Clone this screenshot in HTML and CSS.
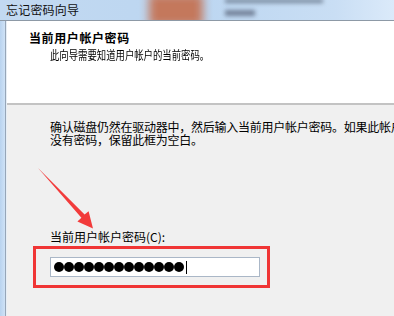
FILE: index.html
```html
<!DOCTYPE html>
<html lang="zh-CN">
<head>
<meta charset="utf-8">
<title>忘记密码向导</title>
<link rel="stylesheet" href="styles.css">
</head>
<body>
<div class="window">
  <div class="titlebar">
    <span class="title">忘记密码向导</span>
    <div class="blob"></div>
    <div class="blurtext">
      <div class="bt1"></div>
      <div class="bt2"></div>
    </div>
  </div>
  <div class="frame">
    <div class="edge"></div>
    <div class="content">
      <div class="header">
        <div class="h-title">当前用户帐户密码</div>
        <div class="h-sub"><span>此向导需要知道用户帐户的当前密码。</span></div>
      </div>
      <div class="sep"></div>
      <div class="body">
        <p class="desc">确认磁盘仍然在驱动器中，然后输入当前用户帐户密码。如果此帐户<br>没有密码，保留此框为空白。</p>
        <div class="label">当前用户帐户密码(C):</div>
        <div class="highlight">
          <div class="input">
            <span class="dot"></span><span class="dot"></span><span class="dot"></span><span class="dot"></span><span class="dot"></span><span class="dot"></span><span class="dot"></span><span class="dot"></span><span class="dot"></span><span class="dot"></span><span class="dot"></span><span class="dot"></span><span class="dot"></span><span class="caret"></span>
          </div>
        </div>
        <svg class="arrow" width="394" height="220" viewBox="0 105 394 220">
          <polygon points="38,168 84.6,214.6 88.6,211.2 93,228.5 77.4,221.6 81.4,217.8" fill="#f23b3b"/>
        </svg>
      </div>
    </div>
  </div>
</div>
</body>
</html>
```
FILE: styles.css
```css
html, body {
  margin: 0;
  padding: 0;
}
body {
  width: 394px;
  height: 316px;
  overflow: hidden;
  font-family: "Noto Sans CJK SC", "Noto Sans", sans-serif;
  font-size: 12px;
  color: #000;
}
.window {
  width: 394px;
  height: 316px;
  display: flex;
  flex-direction: column;
  overflow: hidden;
}
.titlebar {
  height: 20px;
  flex: none;
  display: flex;
  align-items: flex-start;
  background: linear-gradient(to right, #c2d9f1 0%, #bcd6f1 50%, #c9def4 85%, #dbeafa 100%);
  overflow: hidden;
}
.title {
  margin-left: 6px;
  margin-top: 2px;
  line-height: 16px;
  font-size: 12px;
  color: #111;
  letter-spacing: 0.2px;
  white-space: nowrap;
}
.blob {
  margin-left: 70px;
  margin-top: -6px;
  width: 54px;
  height: 32px;
  background: #c4785c;
  filter: blur(5px);
  flex: none;
}
.blurtext {
  margin-left: 22px;
  display: flex;
  flex-direction: column;
  flex: none;
}
.bt1 {
  width: 98px;
  height: 4px;
  margin-top: -1px;
  background: #75869a;
  filter: blur(2px);
}
.bt2 {
  width: 30px;
  height: 6px;
  margin-top: 7px;
  background: #74839a;
  filter: blur(2px);
}
.frame {
  flex: 1;
  display: flex;
  border-top: 1px solid #8d99a6;
  min-height: 0;
}
.edge {
  width: 5px;
  flex: none;
  background: linear-gradient(to right, #b9d3ef, #cfe2f6);
  border-right: 1px solid #97a6b8;
}
.content {
  flex: 1;
  display: flex;
  flex-direction: column;
  border-left: 1px solid #e6eef6;
  min-width: 0;
}
.header {
  height: 82px;
  flex: none;
  background: #fff;
  padding: 10px 0 0 22px;
  box-sizing: border-box;
}
.h-title {
  font-weight: bold;
  font-size: 12px;
  line-height: 14px;
  letter-spacing: 0.6px;
  white-space: nowrap;
}
.h-sub {
  margin: 3px 0 0 21px;
  line-height: 14px;
  white-space: nowrap;
}
.h-sub span {
  display: inline-block;
  transform: scaleX(0.78);
  transform-origin: left center;
}
.sep {
  height: 2px;
  flex: none;
  background: #c3c3c3;
}
.body {
  flex: 1;
  position: relative;
  background: #f0f0f0;
  padding: 15px 0 0 43px;
  overflow: hidden;
}
.desc {
  margin: 0;
  line-height: 13px;
  letter-spacing: -0.25px;
  white-space: nowrap;
}
.label {
  margin-top: 84px;
  line-height: 14px;
  white-space: nowrap;
}
.highlight {
  margin: 2px 0 0 -17px;
  width: 237px;
  height: 42px;
  box-sizing: border-box;
  border: 3px solid #f03535;
  padding: 8px 7px 0 14px;
}
.input {
  height: 20px;
  box-sizing: border-box;
  background: #fff;
  border: 1px solid #aab7c7;
  display: flex;
  align-items: center;
  padding-left: 3px;
}
.dot {
  width: 10px;
  height: 10px;
  border-radius: 50%;
  background: #000;
  flex: none;
}
.caret {
  width: 1px;
  height: 13px;
  background: #000;
  margin-left: 2px;
  flex: none;
}
.arrow {
  position: absolute;
  left: -7px;
  top: 0;
}
```
